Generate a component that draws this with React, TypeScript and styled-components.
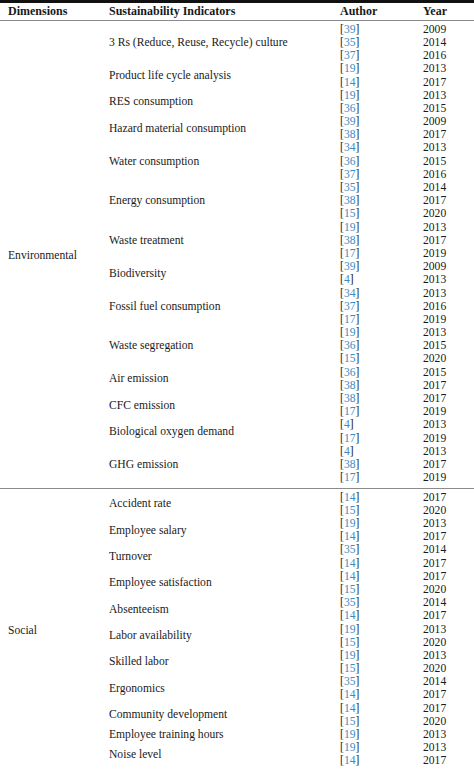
import { Fragment } from 'react';
import styled, { createGlobalStyle } from 'styled-components';

const GlobalStyle = createGlobalStyle`
  html, body {
    margin: 0;
    padding: 0;
    background: #fff;
  }
  body {
    font-family: 'Liberation Serif', 'Times New Roman', serif;
    color: #1a1a1a;
  }
`;

type Indicator = {
  name: string;
  refs: [number, number][];
};

type Group = {
  dimension: string;
  items: Indicator[];
};

const groups: Group[] = [
  {
    dimension: 'Environmental',
    items: [
      { name: '3 Rs (Reduce, Reuse, Recycle) culture', refs: [[39, 2009], [35, 2014], [37, 2016]] },
      { name: 'Product life cycle analysis', refs: [[19, 2013], [14, 2017]] },
      { name: 'RES consumption', refs: [[19, 2013], [36, 2015]] },
      { name: 'Hazard material consumption', refs: [[39, 2009], [38, 2017]] },
      { name: 'Water consumption', refs: [[34, 2013], [36, 2015], [37, 2016]] },
      { name: 'Energy consumption', refs: [[35, 2014], [38, 2017], [15, 2020]] },
      { name: 'Waste treatment', refs: [[19, 2013], [38, 2017], [17, 2019]] },
      { name: 'Biodiversity', refs: [[39, 2009], [4, 2013]] },
      { name: 'Fossil fuel consumption', refs: [[34, 2013], [37, 2016], [17, 2019]] },
      { name: 'Waste segregation', refs: [[19, 2013], [36, 2015], [15, 2020]] },
      { name: 'Air emission', refs: [[36, 2015], [38, 2017]] },
      { name: 'CFC emission', refs: [[38, 2017], [17, 2019]] },
      { name: 'Biological oxygen demand', refs: [[4, 2013], [17, 2019]] },
      { name: 'GHG emission', refs: [[4, 2013], [38, 2017], [17, 2019]] },
    ],
  },
  {
    dimension: 'Social',
    items: [
      { name: 'Accident rate', refs: [[14, 2017], [15, 2020]] },
      { name: 'Employee salary', refs: [[19, 2013], [14, 2017]] },
      { name: 'Turnover', refs: [[35, 2014], [14, 2017]] },
      { name: 'Employee satisfaction', refs: [[14, 2017], [15, 2020]] },
      { name: 'Absenteeism', refs: [[35, 2014], [14, 2017]] },
      { name: 'Labor availability', refs: [[19, 2013], [15, 2020]] },
      { name: 'Skilled labor', refs: [[19, 2013], [15, 2020]] },
      { name: 'Ergonomics', refs: [[35, 2014], [14, 2017]] },
      { name: 'Community development', refs: [[14, 2017], [15, 2020]] },
      { name: 'Employee training hours', refs: [[19, 2013]] },
      { name: 'Noise level', refs: [[19, 2013], [14, 2017]] },
    ],
  },
];

const Table = styled.table`
  width: 474px;
  border-collapse: collapse;
  table-layout: fixed;
  border-top: 3px solid #111;
  font-size: 11.6px;
  line-height: 13.2px;
`;

const HeadCell = styled.th<{ $pad: number }>`
  text-align: left;
  font-weight: bold;
  font-size: 12px;
  height: 17px;
  padding: 0 0 0 ${({ $pad }) => $pad}px;
  border-bottom: 1px solid #8a8a8a;
  vertical-align: middle;
`;

const DimCell = styled.td`
  padding: 0 0 0 8px;
  vertical-align: middle;
`;

const NameCell = styled.td`
  padding: 0 0 0 4px;
  vertical-align: middle;
  white-space: nowrap;
`;

const StackCell = styled.td`
  padding: 0;
  vertical-align: middle;
`;

const Row = styled.tr<{ $first?: boolean; $last?: boolean; $divider?: boolean }>`
  & > td {
    padding-top: ${({ $first }) => ($first ? 1.8 : 0)}px;
    padding-bottom: ${({ $last }) => ($last ? 3.5 : 0)}px;
  }
  ${({ $divider }) => ($divider ? 'border-bottom: 1px solid #8a8a8a;' : '')}
`;

const Line = styled.div`
  height: 13.2px;
`;

const Ref = styled.span`
  color: #3b8bc2;
`;

export default function App() {
  return (
    <>
      <GlobalStyle />
      <Table>
        <colgroup>
          <col style={{ width: 105 }} />
          <col style={{ width: 235 }} />
          <col style={{ width: 83 }} />
          <col style={{ width: 51 }} />
        </colgroup>
        <thead>
          <tr>
            <HeadCell $pad={8}>Dimensions</HeadCell>
            <HeadCell $pad={4}>Sustainability Indicators</HeadCell>
            <HeadCell $pad={0}>Author</HeadCell>
            <HeadCell $pad={0}>Year</HeadCell>
          </tr>
        </thead>
        <tbody>
          {groups.map((g, gi) => (
            <Fragment key={g.dimension}>
              {g.items.map((item, ii) => (
                <Row
                  key={item.name}
                  $first={ii === 0}
                  $last={ii === g.items.length - 1}
                  $divider={ii === g.items.length - 1 && gi < groups.length - 1}
                >
                  {ii === 0 && <DimCell rowSpan={g.items.length}>{g.dimension}</DimCell>}
                  <NameCell>{item.name}</NameCell>
                  <StackCell>
                    {item.refs.map(([r], i) => (
                      <Line key={i}>
                        [<Ref>{r}</Ref>]
                      </Line>
                    ))}
                  </StackCell>
                  <StackCell>
                    {item.refs.map(([, y], i) => (
                      <Line key={i}>{y}</Line>
                    ))}
                  </StackCell>
                </Row>
              ))}
            </Fragment>
          ))}
        </tbody>
      </Table>
    </>
  );
}
